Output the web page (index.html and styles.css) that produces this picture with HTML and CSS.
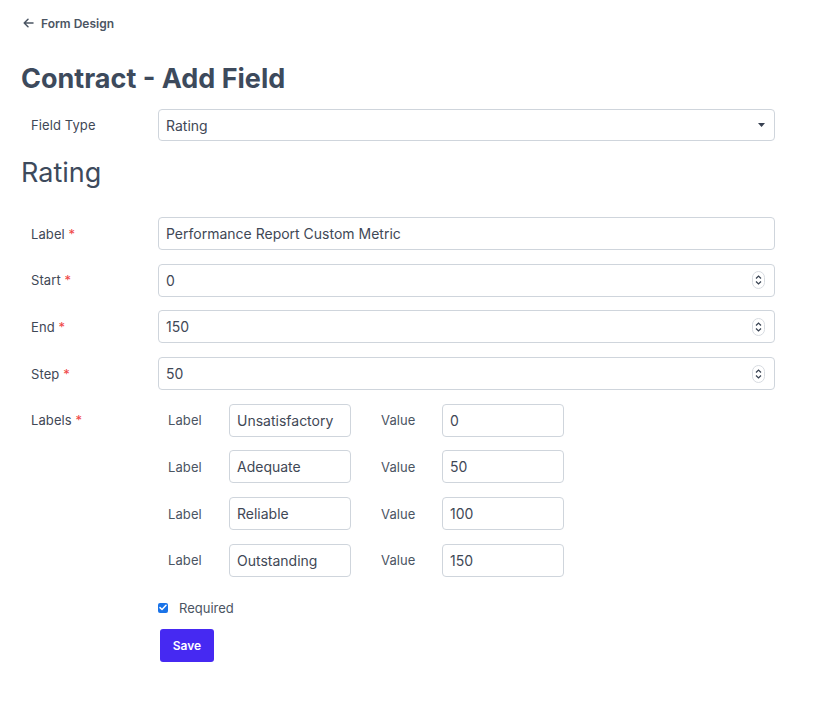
FILE: index.html
```html
<!DOCTYPE html>
<html>
<head>
<meta charset="utf-8">
<link rel="stylesheet" href="styles.css">
</head>
<body>
<div class="page">
  <a class="back" href="#">
    <svg width="11" height="10" viewBox="0 0 11 10" fill="none" stroke="#4b5563" stroke-width="1.5" stroke-linecap="round" stroke-linejoin="round"><path d="M10 5H1.2M5 1.2L1.2 5L5 8.8"/></svg>
    <span>Form Design</span>
  </a>
  <h1 class="title">Contract - Add Field</h1>
  <div class="row type-row">
    <div class="lbl">Field Type</div>
    <div class="box select">
      <span class="val">Rating</span>
      <svg width="7" height="4" viewBox="0 0 7 4"><path d="M0 0H7L3.5 4Z" fill="#374151"/></svg>
    </div>
  </div>
  <h2 class="sub">Rating</h2>
  <div class="form">
    <div class="row">
      <div class="lbl">Label <span class="req">*</span></div>
      <div class="box"><span class="val">Performance Report Custom Metric</span></div>
    </div>
    <div class="row">
      <div class="lbl">Start <span class="req">*</span></div>
      <div class="box"><span class="val">0</span><svg class="spin" width="13" height="18" viewBox="0 0 13 18"><rect x="0.5" y="0.5" width="12" height="17" rx="6" fill="#fff" stroke="#d7dbe0"/><path d="M4 7.5L6.5 5L9 7.5M4 10.5L6.5 13L9 10.5" fill="none" stroke="#374151" stroke-width="1.2"/></svg></div>
    </div>
    <div class="row">
      <div class="lbl">End <span class="req">*</span></div>
      <div class="box"><span class="val">150</span><svg class="spin" width="13" height="18" viewBox="0 0 13 18"><rect x="0.5" y="0.5" width="12" height="17" rx="6" fill="#fff" stroke="#d7dbe0"/><path d="M4 7.5L6.5 5L9 7.5M4 10.5L6.5 13L9 10.5" fill="none" stroke="#374151" stroke-width="1.2"/></svg></div>
    </div>
    <div class="row">
      <div class="lbl">Step <span class="req">*</span></div>
      <div class="box"><span class="val">50</span><svg class="spin" width="13" height="18" viewBox="0 0 13 18"><rect x="0.5" y="0.5" width="12" height="17" rx="6" fill="#fff" stroke="#d7dbe0"/><path d="M4 7.5L6.5 5L9 7.5M4 10.5L6.5 13L9 10.5" fill="none" stroke="#374151" stroke-width="1.2"/></svg></div>
    </div>
    <div class="row labels-row">
      <div class="lbl">Labels <span class="req">*</span></div>
      <div class="pairs">
        <div class="pair">
          <span class="plbl">Label</span><div class="box small"><span class="val">Unsatisfactory</span></div>
          <span class="plbl vlbl">Value</span><div class="box small"><span class="val">0</span></div>
        </div>
        <div class="pair">
          <span class="plbl">Label</span><div class="box small"><span class="val">Adequate</span></div>
          <span class="plbl vlbl">Value</span><div class="box small"><span class="val">50</span></div>
        </div>
        <div class="pair">
          <span class="plbl">Label</span><div class="box small"><span class="val">Reliable</span></div>
          <span class="plbl vlbl">Value</span><div class="box small"><span class="val">100</span></div>
        </div>
        <div class="pair">
          <span class="plbl">Label</span><div class="box small"><span class="val">Outstanding</span></div>
          <span class="plbl vlbl">Value</span><div class="box small"><span class="val">150</span></div>
        </div>
      </div>
    </div>
    <label class="check">
      <span class="cb"><svg width="8" height="7" viewBox="0 0 8 7"><path d="M1 3.6L3 5.5L7 1.2" fill="none" stroke="#fff" stroke-width="1.5" stroke-linecap="round" stroke-linejoin="round"/></svg></span>
      <span>Required</span>
    </label>
    <button class="save">Save</button>
  </div>
</div>
</body>
</html>
```

FILE: styles.css
```css
* { box-sizing: border-box; }
html, body { margin: 0; padding: 0; background: #fff; }
body {
  font-family: Inter, "Noto Sans", "Liberation Sans", sans-serif;
  color: #3f4856;
}
.page {
  padding: 15px 0 0 21px;
  width: 838px;
}
.back {
  display: flex;
  align-items: center;
  gap: 7px;
  margin-left: 2px;
  font-size: 12px;
  font-weight: 600;
  color: #4b5563;
  text-decoration: none;
  height: 16px;
}
.title {
  margin: 32px 0 0 0;
  font-size: 27px;
  line-height: 32px;
  font-weight: 700;
  color: #3d4a5c;
}
.row {
  display: flex;
  align-items: center;
  padding-left: 10px;
  width: 754px;
}
.type-row { margin-top: 14px; }
.lbl {
  width: 127px;
  flex: none;
  font-size: 13px;
  color: #3f4856;
  letter-spacing: 0.1px;
}
.req { color: #ef4444; }
.box {
  flex: 1;
  height: 33px;
  border: 1px solid #cfd5dc;
  border-radius: 4px;
  display: flex;
  align-items: center;
  justify-content: space-between;
  padding: 0 8px 0 7px;
  font-size: 14px;
  color: #3f4856;
  background: #fff;
}
.select { height: 32px; }
.select svg { margin-right: 1px; }
.spin { margin-right: 1px; }
.sub {
  margin: 16px 0 0 0;
  font-size: 27px;
  line-height: 32px;
  font-weight: 400;
  color: #3d4a5c;
}
.form {
  margin-top: 28px;
  display: flex;
  flex-direction: column;
  gap: 13.7px;
}
.labels-row { align-items: flex-start; }
.labels-row .lbl { padding-top: 8px; }
.pairs {
  display: flex;
  flex-direction: column;
  gap: 13.7px;
}
.pair {
  display: flex;
  align-items: center;
  padding-left: 10px;
}
.plbl {
  width: 61px;
  font-size: 13px;
  color: #4b5563;
  letter-spacing: 0.1px;
}
.vlbl { margin-left: 30px; }
.box.small {
  flex: none;
  width: 122px;
}
.check {
  display: flex;
  align-items: center;
  gap: 11px;
  margin-left: 137px;
  margin-top: 9px;
  font-size: 13px;
  color: #4b5563;
}
.cb {
  width: 10px;
  height: 10px;
  border-radius: 2px;
  background: #1a73e8;
  display: flex;
  align-items: center;
  justify-content: center;
}
.save {
  margin: 0 0 0 139px;
  width: 54px;
  height: 33px;
  border: none;
  border-radius: 3px;
  background: #4629f2;
  color: #fff;
  font-family: Inter, "Noto Sans", sans-serif;
  font-size: 12px;
  font-weight: 600;
  cursor: pointer;
}
```
